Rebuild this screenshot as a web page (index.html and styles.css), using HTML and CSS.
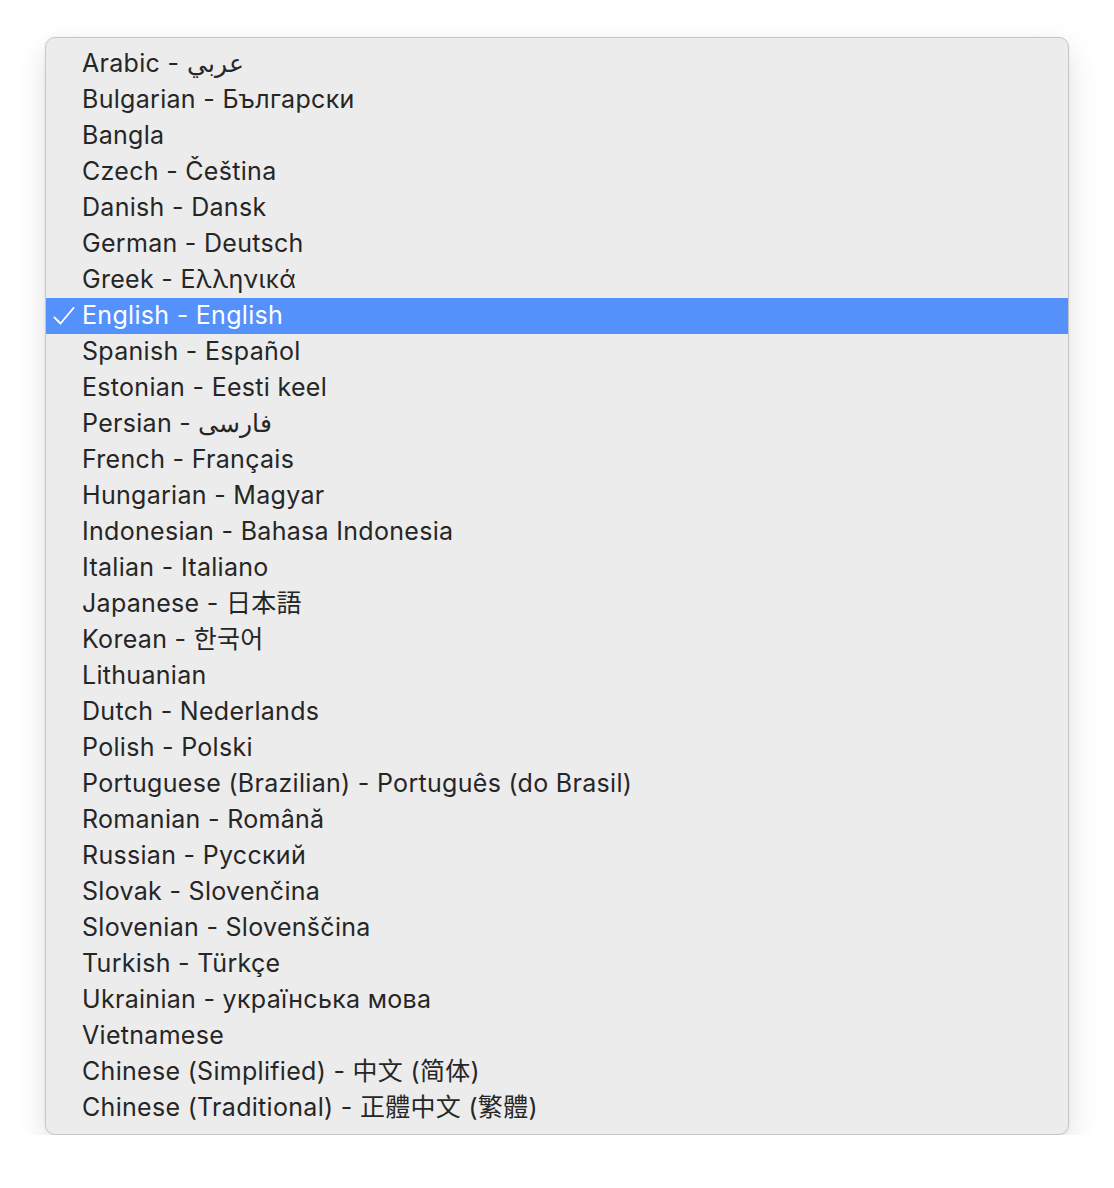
FILE: index.html
```html
<!DOCTYPE html>
<html lang="en">
<head>
<meta charset="utf-8">
<title>Languages</title>
<link rel="stylesheet" href="styles.css">
</head>
<body>
<div class="menu">
  <ul class="list">
    <li class="item">Arabic - <span dir="rtl">عربي</span></li>
    <li class="item">Bulgarian - Български</li>
    <li class="item">Bangla</li>
    <li class="item">Czech - Čeština</li>
    <li class="item">Danish - Dansk</li>
    <li class="item">German - Deutsch</li>
    <li class="item">Greek - Ελληνικά</li>
    <li class="item selected"><svg class="check" viewBox="0 0 22 18" width="22" height="18"><path d="M1.5 10.5 L7.5 16.5 L20.5 1" fill="none" stroke="#fff" stroke-width="1.8" stroke-linecap="round" stroke-linejoin="round"/></svg>English - English</li>
    <li class="item">Spanish - Español</li>
    <li class="item">Estonian - Eesti keel</li>
    <li class="item">Persian - <span dir="rtl">فارسی</span></li>
    <li class="item">French - Français</li>
    <li class="item">Hungarian - Magyar</li>
    <li class="item">Indonesian - Bahasa Indonesia</li>
    <li class="item">Italian - Italiano</li>
    <li class="item">Japanese - <span class="jp">日本語</span></li>
    <li class="item">Korean - <span class="kr">한국어</span></li>
    <li class="item">Lithuanian</li>
    <li class="item">Dutch - Nederlands</li>
    <li class="item">Polish - Polski</li>
    <li class="item">Portuguese (Brazilian) - Português (do Brasil)</li>
    <li class="item">Romanian - Română</li>
    <li class="item">Russian - Русский</li>
    <li class="item">Slovak - Slovenčina</li>
    <li class="item">Slovenian - Slovenščina</li>
    <li class="item">Turkish - Türkçe</li>
    <li class="item">Ukrainian - українська мова</li>
    <li class="item">Vietnamese</li>
    <li class="item">Chinese (Simplified) - <span class="sc">中文 (简体)</span></li>
    <li class="item">Chinese (Traditional) - <span class="tc">正體中文 (繁體)</span></li>
  </ul>
</div>
</body>
</html>
```

FILE: styles.css
```css
html, body {
  margin: 0;
  padding: 0;
  background: #ffffff;
}
body {
  padding: 37px 45px 0 45px;
  font-family: "Inter", "Noto Sans", "Noto Sans CJK SC", sans-serif;
}
.menu {
  box-sizing: border-box;
  width: 1024px;
  height: 1098px;
  background: #ececec;
  border: 1px solid #c6c6c6;
  border-radius: 10px;
  box-shadow: 0 12px 30px rgba(0, 0, 0, 0.12), 0 0 3px rgba(0, 0, 0, 0.06);
  padding: 8px 0;
}
.list {
  list-style: none;
  margin: 0;
  padding: 0;
}
.item {
  position: relative;
  height: 36px;
  line-height: 35px;
  padding-left: 36px;
  font-size: 25px;
  color: #262626;
  white-space: nowrap;
  letter-spacing: 0.3px;
}
.selected {
  background: #5591fb;
  color: #ffffff;
}
.check {
  position: absolute;
  left: 7px;
  top: 9px;
}
.jp, .kr, .sc, .tc { line-height: 1; }
.jp { font-family: "Noto Sans CJK JP", sans-serif; }
.kr { font-family: "Noto Sans CJK KR", sans-serif; }
.sc { font-family: "Inter", "Noto Sans CJK SC", sans-serif; }
.tc { font-family: "Inter", "Noto Sans CJK TC", sans-serif; }
```
